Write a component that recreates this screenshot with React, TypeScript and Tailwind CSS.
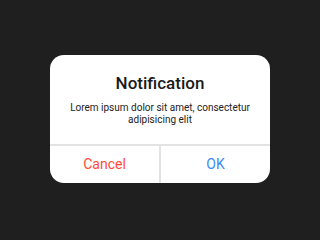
import React from "react";

export default function App() {
  return (
    <div
      className="w-[320px] h-[240px] bg-[#1f1f1f] flex justify-center pt-[55px]"
      style={{ fontFamily: "Roboto, 'Liberation Sans', sans-serif" }}
    >
      <div className="w-[220px] h-[128px] bg-white rounded-[14px] flex flex-col overflow-hidden">
        <div className="flex-1 flex flex-col items-center pt-[17px]">
          <div className="text-[17px] leading-[22px] font-medium text-[#1a1a1a]">Notification</div>
          <div className="mt-[8px] text-[10px] leading-[12px] text-[#222] text-center px-2">
            Lorem ipsum dolor sit amet, consectetur adipisicing elit
          </div>
        </div>
        <div className="h-[39px] border-t-2 border-[#e3e3e3] flex">
          <button className="flex-1 flex items-center justify-center text-[14px] text-[#ff4a3a] border-r-2 border-[#e3e3e3]">
            Cancel
          </button>
          <button className="flex-1 flex items-center justify-center text-[14px] text-[#3d8af7]">
            OK
          </button>
        </div>
      </div>
    </div>
  );
}
